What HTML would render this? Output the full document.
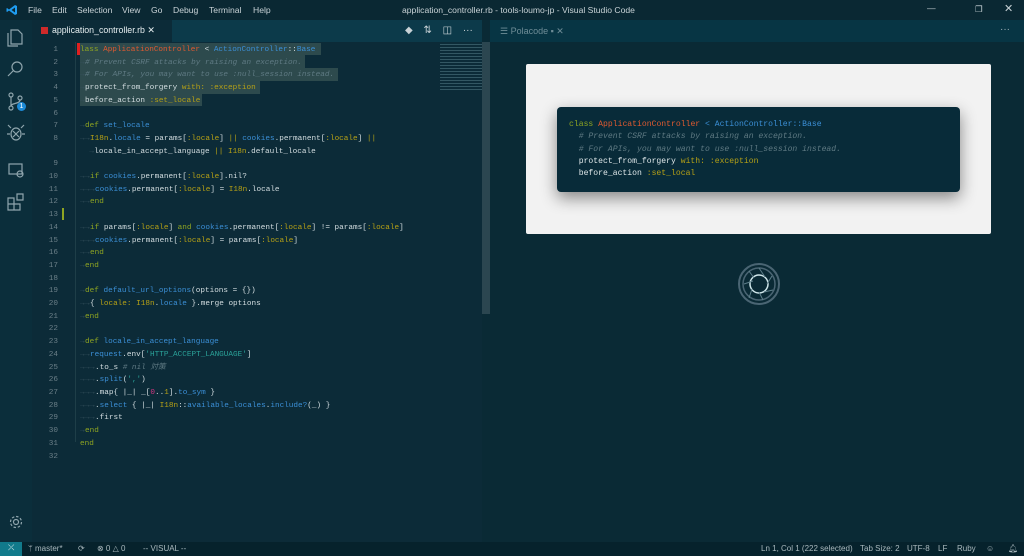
<!DOCTYPE html>
<html><head><meta charset="utf-8"><style>
*{margin:0;padding:0;box-sizing:border-box}
body{width:1024px;height:556px;overflow:hidden;background:#0a2a35;font-family:"Liberation Sans",sans-serif;color:#c9d4d8;position:relative}
.title{position:absolute;left:0;top:0;width:1024px;height:20px;background:#0a2833;font-size:8.6px;color:#c8d2d6}
.title span{position:absolute;top:5px}
.act{position:absolute;left:0;top:20px;width:32px;height:522px;background:#0b2e3b}
.ed{position:absolute;left:32px;top:20px;width:450px;height:522px;background:#0c2b38}
.tabbar{position:absolute;left:32px;top:20px;width:450px;height:22px;background:#0c3a4a}
.tab{position:absolute;left:32px;top:20px;width:140px;height:22px;background:#0c2b38;font-size:8.8px;color:#e6eef0}
.right{position:absolute;left:490px;top:20px;width:534px;height:522px;background:#0a2a35}
.rtabbar{position:absolute;left:490px;top:20px;width:534px;height:22px;background:#073544}
.code{position:absolute;left:32px;top:42px;font-family:"Liberation Mono",monospace;font-size:7.7px;line-height:12.7px;white-space:pre}
.ln{position:absolute;left:0;width:26px;text-align:right;color:#6b7f88}
.cl{position:absolute;left:48px;color:#d3dde0}
.k{color:#8ea422}.c{color:#e05a30}.b{color:#3b8fd6}.s{color:#b5a016}.cm{color:#5f7a83;font-style:italic}.t{color:#2aa198}
i{display:inline-block;width:5px;overflow:hidden;font-style:normal;color:#3a5560;vertical-align:top}
i::before{content:"→"}
.status{position:absolute;left:0;top:542px;width:1024px;height:14px;background:#06222c;font-size:8px;color:#a9b8bd}
.status span{position:absolute;top:2px}
.sel{position:absolute;background:#2d4a4d}
</style></head><body>
<div class="title">
<svg style="position:absolute;left:6px;top:4px" width="12" height="12" viewBox="0 0 12 12"><path d="M9 1 L11 2 V10 L9 11 L3 6.5 L1 8 L0.5 7.5 V4.5 L1 4 L3 5.5 Z M9 3.5 L5.5 6 L9 8.5Z" fill="#1f9cf0"/></svg>
<span style="left:28px">File</span><span style="left:52px">Edit</span><span style="left:77px">Selection</span><span style="left:122px">View</span><span style="left:151px">Go</span><span style="left:173px">Debug</span><span style="left:209px">Terminal</span><span style="left:253px">Help</span>
<span style="left:402px">application_controller.rb - tools-loumo-jp - Visual Studio Code</span>
<span style="left:927px;top:3px">—</span><span style="left:975px;top:4px">❐</span><span style="left:1004px;top:2px;font-size:11px">✕</span>
</div>
<div class="act">
<svg width="32" height="240" viewBox="0 0 32 240" fill="none" stroke="#8fa5ad" stroke-width="1.2">
<path d="M11 10h7l4 4v10h-11z M8 13v13h10"/>
<circle cx="17" cy="47" r="5"/><path d="M13 51l-5 5"/>
<circle cx="11" cy="75" r="2"/><circle cx="11" cy="88" r="2"/><circle cx="20" cy="78" r="2"/><path d="M11 77v9 M20 80c0 4-9 3-9 6"/>
<ellipse cx="16" cy="114" rx="5" ry="6"/><path d="M11 108l-3-3 M21 108l3-3 M10 114h-3 M22 114h3 M13 111l6 6 M19 111l-6 6"/>
<rect x="9" y="144" width="13" height="10"/><circle cx="20" cy="154" r="3"/>
<path d="M8 178h6v6h-6z M8 184h6v6h-6z M14 184h6v6h-6z M17 174h6v6h-6z"/>
</svg>
<div style="position:absolute;left:17px;top:82px;width:9px;height:9px;border-radius:50%;background:#1c8ad6;color:#fff;font-size:7px;text-align:center;line-height:9px">1</div>
<svg style="position:absolute;left:8px;top:494px" width="16" height="16" viewBox="0 0 16 16" fill="none" stroke="#8fa5ad" stroke-width="1.2"><circle cx="8" cy="8" r="2.5"/><circle cx="8" cy="8" r="5.5" stroke-dasharray="2.5 1.8"/></svg>
</div>
<div class="ed"></div>
<div class="tabbar"></div>
<div class="tab"><span style="position:absolute;left:9px;top:7px;width:7px;height:7px;background:#d02a2a"></span><span style="position:absolute;left:20px;top:5px">application_controller.rb ✕</span></div>
<div style="position:absolute;left:405px;top:25px;font-size:10px;color:#c8d2d6;word-spacing:8px">◆ ⇅ ◫ ···</div>
<div class="sel" style="left:80px;top:43px;width:241px;height:12px"></div>
<div class="sel" style="left:80px;top:55px;width:225px;height:13px"></div>
<div class="sel" style="left:80px;top:68px;width:258px;height:13px"></div>
<div class="sel" style="left:80px;top:81px;width:180px;height:13px"></div>
<div class="sel" style="left:80px;top:93px;width:122px;height:13px"></div>
<div style="position:absolute;left:77px;top:43px;width:3px;height:12px;background:#e02020"></div>
<div style="position:absolute;left:62px;top:208px;width:2px;height:12px;background:#8ea422"></div>
<div style="position:absolute;left:75px;top:42px;width:1px;height:400px;background:#1e3e48"></div>
<div class="code">
<div class="ln" style="top:2px">1
2
3
4
5
6
7
8

9
10
11
12
13
14
15
16
17
18
19
20
21
22
23
24
25
26
27
28
29
30
31
32</div>
<div class="cl" style="top:2px"><span class="k">lass</span> <span class="c">ApplicationController</span> &lt; <span class="b">ActionController</span>::<span class="b">Base</span>
<i></i><span class="cm"># Prevent CSRF attacks by raising an exception.</span>
<i></i><span class="cm"># For APIs, you may want to use :null_session instead.</span>
<i></i>protect_from_forgery <span class="s">with: :exception</span>
<i></i>before_action <span class="s">:set_locale</span>

<i></i><span class="k">def</span> <span class="b">set_locale</span>
<i></i><i></i><span class="s">I18n</span>.<span class="b">locale</span> = params[<span class="s">:locale</span>] <span class="s">||</span> <span class="b">cookies</span>.permanent[<span class="s">:locale</span>] <span class="s">||</span>
  <i></i>locale_in_accept_language <span class="s">||</span> <span class="s">I18n</span>.default_locale

<i></i><i></i><span class="k">if</span> <span class="b">cookies</span>.permanent[<span class="s">:locale</span>].nil?
<i></i><i></i><i></i><span class="b">cookies</span>.permanent[<span class="s">:locale</span>] = <span class="s">I18n</span>.locale
<i></i><i></i><span class="k">end</span>

<i></i><i></i><span class="k">if</span> params[<span class="s">:locale</span>] <span class="k">and</span> <span class="b">cookies</span>.permanent[<span class="s">:locale</span>] != params[<span class="s">:locale</span>]
<i></i><i></i><i></i><span class="b">cookies</span>.permanent[<span class="s">:locale</span>] = params[<span class="s">:locale</span>]
<i></i><i></i><span class="k">end</span>
<i></i><span class="k">end</span>

<i></i><span class="k">def</span> <span class="b">default_url_options</span>(options = {})
<i></i><i></i>{ <span class="s">locale:</span> <span class="s">I18n</span>.<span class="b">locale</span> }.merge options
<i></i><span class="k">end</span>

<i></i><span class="k">def</span> <span class="b">locale_in_accept_language</span>
<i></i><i></i><span class="b">request</span>.env[<span class="t">'HTTP_ACCEPT_LANGUAGE'</span>]
<i></i><i></i><i></i>.to_s <span class="cm"># nil 対策</span>
<i></i><i></i><i></i>.<span class="b">split</span>(<span class="t">','</span>)
<i></i><i></i><i></i>.map{ |_| _[<span style="color:#d33682">0</span>..<span class="s">1</span>].<span class="b">to_sym</span> }
<i></i><i></i><i></i>.<span class="b">select</span> { |_| <span class="s">I18n</span>::<span class="b">available_locales</span>.<span class="b">include?</span>(_) }
<i></i><i></i><i></i>.first
<i></i><span class="k">end</span>
<span class="k">end</span></div>
</div>
<div style="position:absolute;left:440px;top:42px;width:42px;height:50px;background:repeating-linear-gradient(#0c2b38 0 2px,#4d7480 2px 3px);opacity:.6"></div>
<div style="position:absolute;left:482px;top:42px;width:8px;height:272px;background:#2b4650"></div>
<div style="position:absolute;left:490px;top:20px;width:1px;height:522px;background:#1a3a45"></div>
<div class="right"></div>
<div class="rtabbar"></div>
<div style="position:absolute;left:500px;top:26px;font-size:9px;color:#6f8d97">☰ Polacode ▪ ✕</div>
<div style="position:absolute;left:1000px;top:24px;font-size:10px;color:#9fb0b6">···</div>
<div style="position:absolute;left:526px;top:64px;width:465px;height:170px;background:#f2f2f2;border-radius:2px"></div>
<div style="position:absolute;left:557px;top:107px;width:403px;height:85px;background:#082b39;border-radius:4px;box-shadow:0 6px 16px rgba(0,0,0,.45)"></div>
<div style="position:absolute;left:569px;top:119px;font-family:'Liberation Mono',monospace;font-size:8.1px;line-height:12.3px;white-space:pre;color:#e0e8ea"><span class="k">class</span> <span class="c">ApplicationController</span> <span class="b">&lt;</span> <span class="b">ActionController::Base</span>
  <span class="cm"># Prevent CSRF attacks by raising an exception.</span>
  <span class="cm"># For APIs, you may want to use :null_session instead.</span>
  protect_from_forgery <span class="s">with: :exception</span>
  before_action <span class="s">:set_local</span></div>
<svg style="position:absolute;left:737px;top:262px" width="44" height="44" viewBox="0 0 44 44" fill="none"><circle cx="22" cy="22" r="20" stroke="#4a6573" stroke-width="2"/><circle cx="22" cy="22" r="16" stroke="#4a6573" stroke-width="1.5"/><circle cx="22" cy="22" r="9" stroke="#cfe6ea" stroke-width="1.5"/><path d="M22 6l6 9M35 14l-5 8M36 28l-9 2M26 38l-4-8M12 36l3-9M7 22l9-3M12 9l5 7" stroke="#5e7f8a"/></svg>
<div class="status">
<div style="position:absolute;left:0;top:0;width:22px;height:14px;background:#117a8b"></div>
<span style="left:8px;top:1px;color:#fff">⤫</span>
<span style="left:28px">ᛘ master*</span><span style="left:78px">⟳</span><span style="left:97px">⊗ 0 △ 0</span><span style="left:143px">-- VISUAL --</span>
<span style="left:761px">Ln 1, Col 1 (222 selected)</span><span style="left:860px">Tab Size: 2</span><span style="left:907px">UTF-8</span><span style="left:938px">LF</span><span style="left:957px">Ruby</span><span style="left:986px">☺</span><span style="left:1008px">🔔︎</span>
</div>
</body></html>
